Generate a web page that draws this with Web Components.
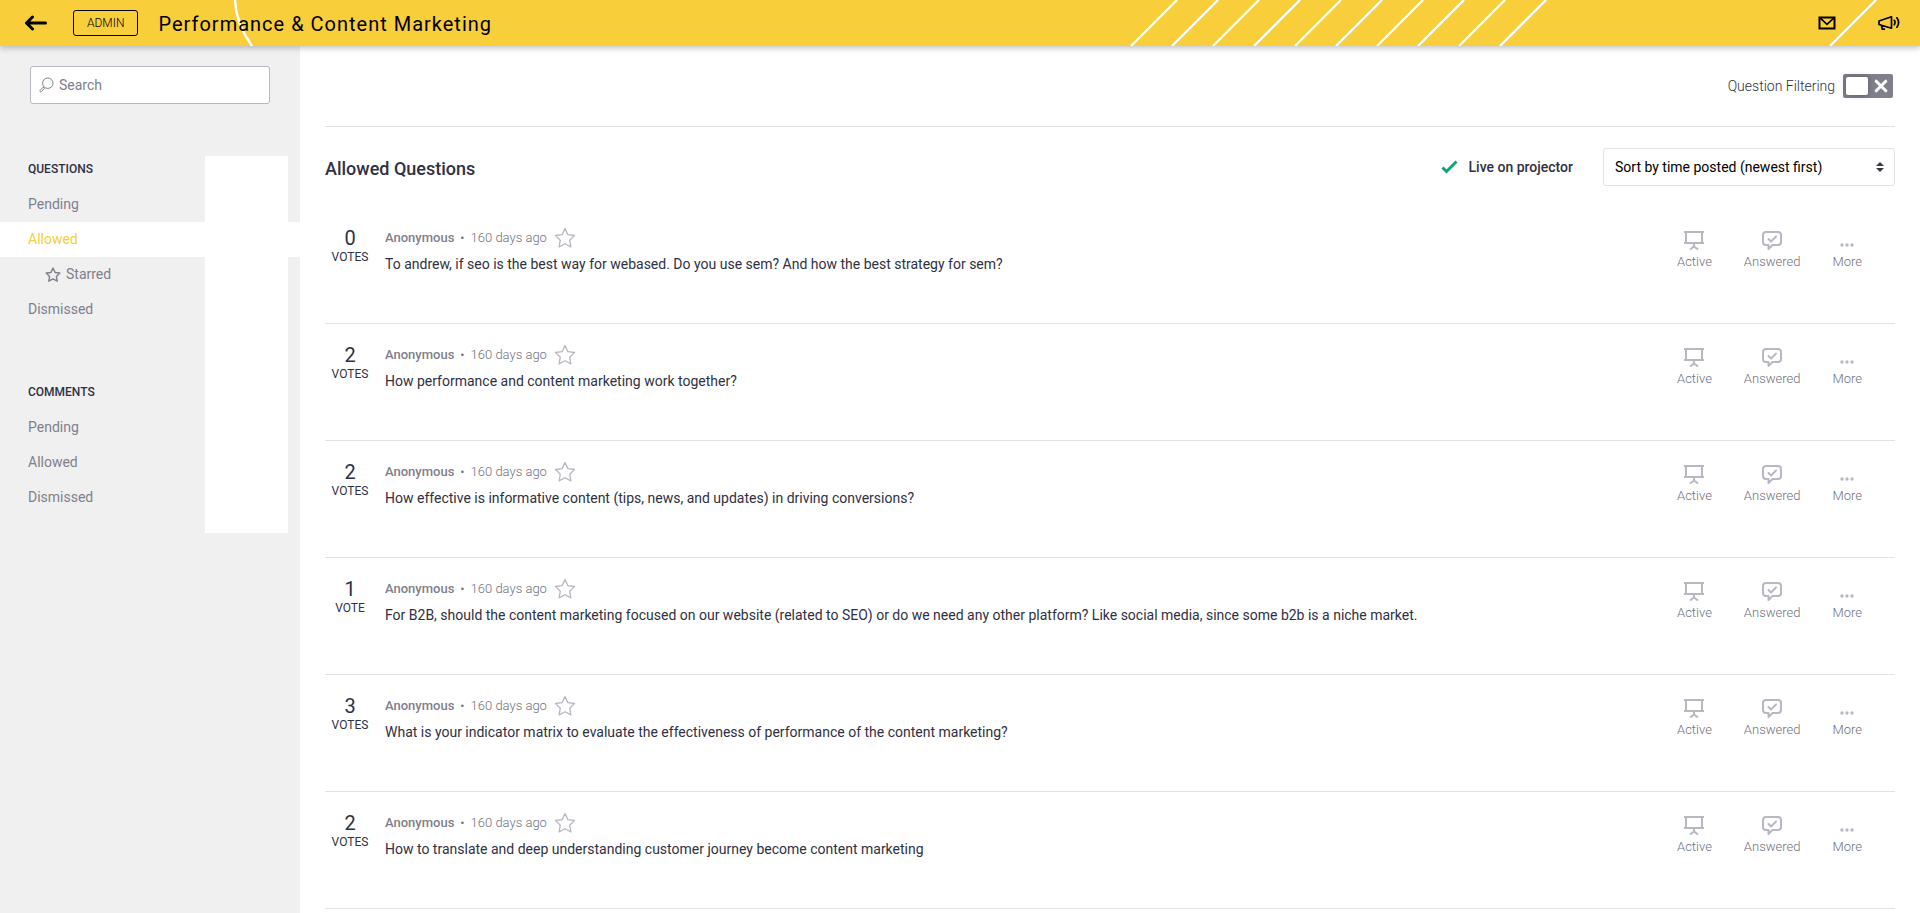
<!DOCTYPE html>
<html lang="en">
<head>
<meta charset="utf-8">
<meta name="viewport" content="width=device-width, initial-scale=1">
<title>Performance &amp; Content Marketing</title>
<style>
  html{
    overflow: hidden;
  }
  body{
    margin: 0;
    height: 100vh;
    overflow: hidden;
    background-color: #ffffff;
    color: #2f3044;
    font-family: Roboto, "Liberation Sans", sans-serif;
    font-size: 14px;
    line-height: 20px;
  }
</style>
</head>
<body>

<admin-app>
  <app-header slot="header">Performance &amp; Content Marketing</app-header>

  <side-bar slot="sidebar">
    <nav-group label="Questions">
      <nav-item>Pending</nav-item>
      <nav-item active>Allowed</nav-item>
      <nav-item sub>Starred</nav-item>
      <nav-item>Dismissed</nav-item>
    </nav-group>
    <nav-group label="Comments">
      <nav-item>Pending</nav-item>
      <nav-item>Allowed</nav-item>
      <nav-item>Dismissed</nav-item>
    </nav-group>
  </side-bar>

  <filter-bar></filter-bar>
  <list-header>Allowed Questions</list-header>

  <question-row votes="0">To andrew, if seo is the best way for webased. Do you use sem? And how the best strategy for sem?</question-row>
  <question-row votes="2">How performance and content marketing work together?</question-row>
  <question-row votes="2">How effective is informative content (tips, news, and updates) in driving conversions?</question-row>
  <question-row votes="1">For B2B, should the content marketing focused on our website (related to SEO) or do we need any other platform? Like social media, since some b2b is a niche market.</question-row>
  <question-row votes="3">What is your indicator matrix to evaluate the effectiveness of performance of the content marketing?</question-row>
  <question-row votes="2">How to translate and deep understanding customer journey become content marketing</question-row>
</admin-app>

<script>
const STAR = 'M11 1.5l2.9 6.1 6.6.9-4.8 4.7 1.2 6.7-5.9-3.2-5.9 3.2 1.2-6.7L1.5 8.5l6.6-.9z';

// attaches an open shadow root holding the given markup
function render(el, html){
  const template = document.createElement('template');
  template.innerHTML = html;
  el.attachShadow({mode:'open'});
  el.shadowRoot.appendChild(template.content.cloneNode(true))
}

class AdminApp extends HTMLElement {
  constructor(){
    super();
    render(this, `
      <style>
        :host{
          display: grid;
          grid-template-columns: 300px 1fr;
          grid-template-rows: auto 1fr;
          height: 100%;
        }
        slot[name=header]{
          display: block;
          grid-column: 1 / -1;
          z-index: 1;
        }
        slot[name=sidebar]{
          display: block;
          background-color: #f0f0f0;
        }
        main{
          min-width: 0;
          padding: 0 25px;
          overflow: hidden;
        }
      </style>
      <slot name="header"></slot>
      <slot name="sidebar"></slot>
      <main><slot></slot></main>
    `)
  }
}

class AppHeader extends HTMLElement {
  constructor(){
    super();
    render(this, `
      <style>
        :host{
          display: grid;
          background-color: #f8ce3a;
          color: #000000;
          box-shadow: 0 2px 6px rgba(47, 48, 68, 0.3);
        }
        .art, .bar{
          grid-area: 1 / 1;
        }
        .art{
          display: block;
          width: 100%;
          height: 46px;
        }
        .bar{
          display: flex;
          align-items: center;
          padding: 0 20px 0 24px;
        }
        button{
          display: flex;
          padding: 0;
          border: 0;
          background: none;
          color: inherit;
          font-family: inherit;
          cursor: pointer;
        }
        .admin{
          margin-left: 25px;
          padding: 0 13px;
          border: 1px solid #000000;
          border-radius: 3px;
          font-size: 12px;
          font-weight: 300;
          line-height: 24px;
        }
        h1{
          flex: 1;
          margin: 2px 0 0 20px;
          font-size: 20px;
          font-weight: 400;
          line-height: 24px;
          letter-spacing: 1px;
        }
        .mail{
          margin-right: 42px;
        }
      </style>
      <svg class="art" viewBox="0 0 1920 46" preserveAspectRatio="xMinYMin slice" fill="none" stroke="#ffffff" stroke-width="2.400" aria-hidden="true">
        <path d="M235 0Q236 24 252 46"/>
        <path d="M1131 46l46-46M1172 46l46-46M1213 46l46-46M1254 46l46-46M1295 46l46-46M1336 46l46-46M1377 46l46-46M1418 46l46-46M1459 46l46-46M1500 46l46-46M1830 46l46-46"/>
      </svg>
      <div class="bar">
        <button aria-label="Back">
          <svg width="24" height="16" viewBox="0 0 24 16" fill="none" stroke="currentColor" stroke-width="3" stroke-linecap="round" stroke-linejoin="round"><path d="M21.500 8H3M8.500 2L2.500 8l6 6"/></svg>
        </button>
        <button class="admin">ADMIN</button>
        <h1><slot></slot></h1>
        <button class="mail" aria-label="Messages">
          <svg width="18" height="14" viewBox="0 0 18 14" fill="none" stroke="currentColor" stroke-width="2"><path d="M1.500 1.500h15v11h-15z"/><path stroke-width="1.600" d="M2 1.800l7 6.500 7-6.500"/></svg>
        </button>
        <button aria-label="Announcements">
          <svg width="22" height="16" viewBox="0 0 22 16" fill="none" stroke="currentColor" stroke-width="1.700" stroke-linejoin="round" stroke-linecap="round"><path d="M1 6L13.500 1.800v11.400L1 9.500zM3.500 10.500l.8 3.700h2"/><path d="M16.300 5.300q1.400 2.200 0 4.400M18.900 2.800q3.400 4.700 0 9.400"/></svg>
        </button>
      </div>
    `)
  }
}

class SideBar extends HTMLElement {
  constructor(){
    super();
    render(this, `
      <style>
        :host{
          display: block;
          padding-top: 20px;
        }
        .search{
          display: flex;
          align-items: center;
          gap: 5px;
          margin: 0 30px 48px;
          padding: 0 8px;
          border: 1px solid #b7b8c2;
          border-radius: 3px;
          background-color: #ffffff;
        }
        input{
          flex: 1;
          min-width: 0;
          height: 36px;
          padding: 0;
          border: 0;
          outline: 0;
          background: none;
          color: #2f3044;
          font: inherit;
        }
        input::placeholder{
          color: #7f808c;
          opacity: 1;
        }
        nav{
          display: grid;
          grid-template-columns: 205px 83px 1fr;
        }
        .groups{
          grid-area: 1 / 1 / 2 / 4;
        }
        .counts{
          grid-area: 1 / 2;
          height: 377px;
          margin-top: 4px;
          background-color: #ffffff;
        }
      </style>
      <label class="search">
        <svg width="15" height="16" viewBox="0 0 15 16" fill="none" stroke="#7f808c" aria-hidden="true"><circle cx="8.800" cy="6.200" r="5.200"/><path d="M5 10l-1 1M4.200 10.200l1.200 1.200-3 3.100q-.8.500-1.300 0-.5-.6 0-1.200z"/></svg>
        <input type="text" placeholder="Search" aria-label="Search">
      </label>
      <nav>
        <div class="groups"><slot></slot></div>
        <div class="counts"></div>
      </nav>
    `)
  }
}

class NavGroup extends HTMLElement {
  constructor(){
    super();
    render(this, `
      <style>
        :host{
          display: block;
          margin-bottom: 48px;
        }
        h2{
          margin: 0;
          padding: 0 28px;
          font-size: 12px;
          font-weight: 500;
          line-height: 35px;
          text-transform: uppercase;
        }
      </style>
      <h2></h2>
      <slot></slot>
    `)
  }
  connectedCallback(){
    this.shadowRoot.querySelector('h2').textContent = this.getAttribute('label')
  }
}

class NavItem extends HTMLElement {
  constructor(){
    super();
    render(this, `
      <style>
        :host{
          display: block;
        }
        a{
          display: flex;
          align-items: center;
          gap: 5px;
          padding: 0 28px;
          color: #7f808c;
          line-height: 35px;
          text-decoration: none;
        }
        svg{
          display: none;
        }
        :host([active]) a{
          background-color: #ffffff;
          color: #f8ce3a;
        }
        :host([sub]) a{
          padding-left: 45px;
        }
        :host([sub]) svg{
          display: block;
        }
      </style>
      <a href="#"><svg width="16" height="15" viewBox="0 0 22 21" fill="none" stroke="currentColor" stroke-width="2" stroke-linejoin="round" aria-hidden="true"><path d="${STAR}"/></svg><slot></slot></a>
    `)
  }
}

class FilterBar extends HTMLElement {
  constructor(){
    super();
    render(this, `
      <style>
        :host{
          display: block;
          border-bottom: 1px solid #e2e2e4;
        }
        label{
          display: flex;
          align-items: center;
          justify-content: flex-end;
          gap: 8px;
          height: 80px;
          padding-right: 2px;
          font-weight: 300;
        }
        .switch{
          display: grid;
          grid-template-columns: 28px 1fr;
          align-items: center;
          width: 50px;
          height: 24px;
          border-radius: 2px;
          background-color: #7f808c;
        }
        input, svg{
          grid-row: 1;
        }
        input{
          grid-column: 1;
          appearance: none;
          width: 22px;
          height: 18px;
          margin: 0 3px;
          border-radius: 2px;
          background-color: #ffffff;
          box-shadow: 0 0 6px rgba(0, 0, 0, 0.3);
        }
        svg{
          grid-column: 2;
          margin-left: 3px;
        }
      </style>
      <label>
        Question Filtering
        <span class="switch">
          <input type="checkbox" role="switch">
          <svg width="14" height="14" viewBox="0 0 14 14" stroke="#ffffff" stroke-width="3" stroke-linecap="round" aria-hidden="true"><path d="M2.200 2.200l9.600 9.600M11.800 2.200l-9.600 9.600"/></svg>
        </span>
      </label>
    `)
  }
}

class ListHeader extends HTMLElement {
  constructor(){
    super();
    render(this, `
      <style>
        :host{
          display: flex;
          align-items: center;
          height: 80px;
        }
        h2{
          flex: 1;
          margin: 3px 0 0;
          font-size: 18px;
          font-weight: 500;
          line-height: 24px;
        }
        .live{
          display: flex;
          align-items: center;
          gap: 11px;
          margin-right: 30px;
          font-weight: 500;
        }
        .sort{
          display: grid;
          align-items: center;
          width: 292px;
        }
        select, .arrows{
          grid-area: 1 / 1;
        }
        select{
          appearance: none;
          height: 38px;
          padding: 0 30px 0 11px;
          border: 1px solid #e2e2e4;
          border-radius: 3px;
          background-color: #ffffff;
          color: #000000;
          font: inherit;
        }
        .arrows{
          justify-self: end;
          margin-right: 11px;
          pointer-events: none;
        }
      </style>
      <h2><slot></slot></h2>
      <span class="live">
        <svg width="17" height="14" viewBox="0 0 17 14" fill="none" stroke="#0ba678" stroke-width="3" aria-hidden="true"><path d="M1.500 7.500l4 4L15.500 1.500"/></svg>
        Live on projector
      </span>
      <div class="sort">
        <select aria-label="Sort questions">
          <option>Sort by time posted (newest first)</option>
        </select>
        <svg class="arrows" width="8" height="10" viewBox="0 0 8 10" fill="#343a40" aria-hidden="true"><path d="M0 4l4-4 4 4zM0 6h8l-4 4z"/></svg>
      </div>
    `)
  }
}

class QuestionRow extends HTMLElement {
  constructor(){
    super();
    render(this, `
      <style>
        :host{
          display: flex;
          box-sizing: border-box;
          height: 117px;
          padding-top: 19px;
          border-bottom: 1px solid #e2e2e4;
        }
        .votes{
          width: 50px;
          margin-right: 10px;
          font-size: 12px;
          line-height: 14px;
          text-align: center;
        }
        .votes b{
          display: block;
          font-size: 20px;
          font-weight: 400;
          line-height: 24px;
        }
        .body{
          flex: 1;
          min-width: 0;
        }
        .meta{
          display: flex;
          align-items: center;
          gap: 6px;
          height: 24px;
          color: #7f808c;
          font-size: 13px;
          font-weight: 300;
        }
        .meta span{
          color: #70717d;
        }
        .meta strong{
          font-weight: 500;
        }
        button{
          display: flex;
          flex-direction: column;
          align-items: center;
          padding: 0;
          border: 0;
          background: none;
          color: #70717d;
          font: inherit;
          cursor: pointer;
        }
        .meta button{
          padding: 0 0 2px 1px;
        }
        p{
          margin: 4px 0 0;
          font-size: 14px;
          line-height: 20px;
        }
        .actions{
          display: flex;
          align-items: flex-start;
          gap: 32px;
          padding: 4px 33px 0 20px;
          font-size: 13px;
          font-weight: 300;
          line-height: 20px;
        }
        svg{
          display: block;
          color: #b7b8c2;
        }
      </style>
      <div class="votes"><b class="count"></b><span class="unit"></span></div>
      <div class="body">
        <div class="meta">
          <strong>Anonymous</strong><span>•</span><span>160 days ago</span>
          <button aria-label="Star"><svg width="22" height="21" viewBox="0 0 22 21" fill="none" stroke="currentColor" stroke-width="1.300" stroke-linejoin="round"><path d="${STAR}"/></svg></button>
        </div>
        <p><slot></slot></p>
      </div>
      <div class="actions">
        <button><svg width="20" height="22" viewBox="0 0 20 22" fill="none" stroke="currentColor" stroke-width="2"><path d="M0 2h20M0 13h20M2 2v11M18 2v11M10 13v4M6 19.500l4-3 4 3"/></svg>Active</button>
        <button><svg width="20" height="22" viewBox="0 0 20 22" fill="none" stroke="currentColor" stroke-width="2" stroke-linejoin="round" stroke-linecap="round"><path d="M4 2h12q3 0 3 3v7q0 3-3 3h-5.500L6.500 19v-4H4q-3 0-3-3V5q0-3 3-3z"/><path d="M6.500 9l2.500 2.500L14 6.500"/></svg>Answered</button>
        <button><svg width="20" height="22" viewBox="0 0 20 22" fill="currentColor"><circle cx="5" cy="15" r="1.700"/><circle cx="10" cy="15" r="1.700"/><circle cx="15" cy="15" r="1.700"/></svg>More</button>
      </div>
    `)
  }
  connectedCallback(){
    const votes = this.getAttribute('votes');
    this.shadowRoot.querySelector('.count').textContent = votes;
    this.shadowRoot.querySelector('.unit').textContent = votes == 1 ? 'VOTE' : 'VOTES'
  }
}

window.customElements.define('admin-app', AdminApp)
window.customElements.define('app-header', AppHeader)
window.customElements.define('side-bar', SideBar)
window.customElements.define('nav-group', NavGroup)
window.customElements.define('nav-item', NavItem)
window.customElements.define('filter-bar', FilterBar)
window.customElements.define('list-header', ListHeader)
window.customElements.define('question-row', QuestionRow)
</script>
</body>
</html>
